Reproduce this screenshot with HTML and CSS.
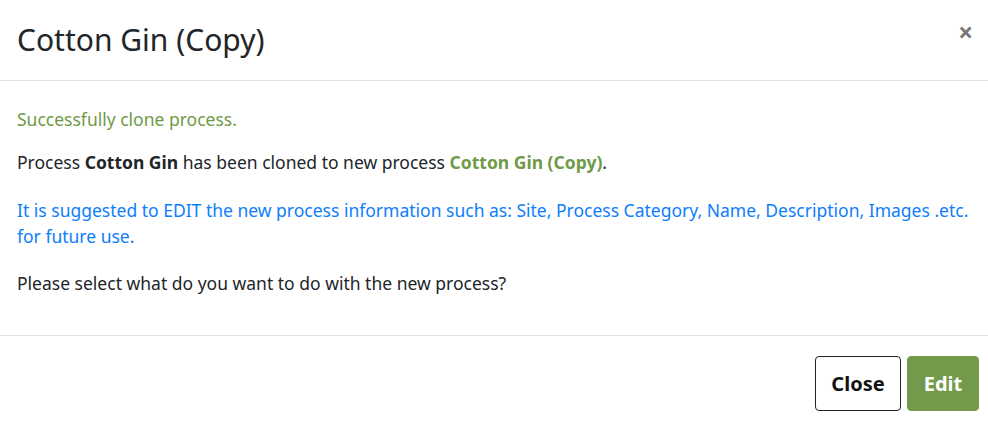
FILE: index.html
```html
<!DOCTYPE html>
<html>
<head>
<meta charset="utf-8">
<link rel="stylesheet" href="styles.css">
</head>
<body>
<div class="modal">
  <div class="modal-header">
    <h4 class="modal-title">Cotton Gin (Copy)</h4>
    <button class="close-x" aria-label="Close">×</button>
  </div>
  <div class="modal-body">
    <p class="msg-success">Successfully clone process.</p>
    <p class="msg">Process <b>Cotton Gin</b> has been cloned to new process <b class="green">Cotton Gin (Copy)</b>.</p>
    <p class="msg-info">It is suggested to EDIT the new process information such as: Site, Process Category, Name, Description, Images .etc. for future use.</p>
    <p class="msg">Please select what do you want to do with the new process?</p>
  </div>
  <div class="modal-footer">
    <button class="btn btn-close">Close</button>
    <button class="btn btn-edit">Edit</button>
  </div>
</div>
</body>
</html>
```
FILE: styles.css
```css
* { box-sizing: border-box; }
html, body { margin: 0; padding: 0; background: #fff; }
body {
  font-family: "Noto Sans", "Open Sans", sans-serif;
  color: #212529;
  font-size: 17.5px;
  line-height: 26px;
}
.modal { width: 988px; height: 421px; background: #fff; }
.modal-header {
  height: 81px;
  border-bottom: 1px solid #dee2e6;
  display: flex;
  align-items: flex-start;
  justify-content: space-between;
  padding: 0 15px 0 17px;
}
.modal-title {
  margin: 0;
  padding-top: 20px;
  font-size: 30px;
  line-height: 40px;
  font-weight: 400;
  color: #212529;
}
.close-x {
  margin-top: 18px;
  border: 0;
  background: none;
  padding: 0;
  font-family: "Noto Sans", sans-serif;
  font-size: 26px;
  line-height: 28px;
  font-weight: 700;
  color: #777;
  cursor: pointer;
}
.modal-body { padding: 25px 8px 39px 17px; }
.modal-body p { margin: 0; }
.msg-success { color: #6f9a47; margin-bottom: 17px !important; }
.msg { margin-bottom: 22px !important; }
.msg-info { color: #0d7efc; margin-bottom: 21px !important; }
.msg:last-child { margin-bottom: 0 !important; }
.green { color: #6f9a47; }
.modal-footer {
  border-top: 1px solid #dee2e6;
  display: flex;
  justify-content: flex-end;
  gap: 6px;
  padding: 20px 9px 10px;
}
.btn {
  height: 55px;
  border-radius: 4px;
  font-family: "Noto Sans", sans-serif;
  font-size: 20px;
  font-weight: 700;
  padding: 0;
  cursor: pointer;
}
.btn-close { background: #fff; color: #111; border: 1px solid #222; width: 86px; }
.btn-edit { background: #739a4a; color: #fff; border: 1px solid #739a4a; width: 72px; }
```
